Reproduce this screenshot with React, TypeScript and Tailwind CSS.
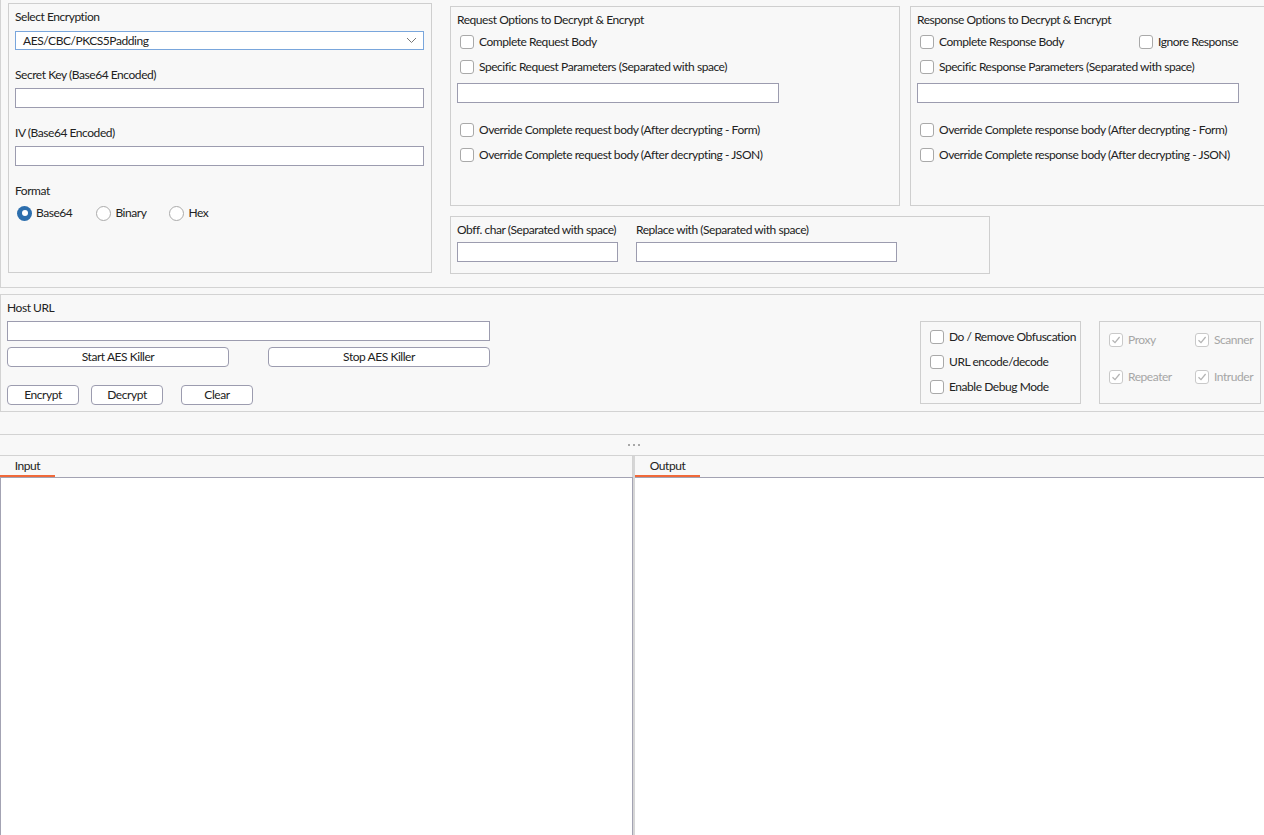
import React from "react";

const FONT = { fontFamily: "Lato, 'Noto Sans', sans-serif", letterSpacing: "-0.45px" };

function Checkbox({ label, disabled = false, checked = false }: { label: string; disabled?: boolean; checked?: boolean }) {
  return (
    <div className="flex items-center h-[25px]">
      <span
        className={`w-[14px] h-[14px] rounded-[3px] border bg-white flex items-center justify-center shrink-0 ${
          disabled ? "border-[#c9c9c9]" : "border-[#a9a9a9]"
        }`}
      >
        {checked && (
          <svg width="10" height="10" viewBox="0 0 10 10">
            <path d="M1.5 5.2 L4 7.6 L8.6 2" fill="none" stroke={disabled ? "#b4b4b4" : "#444"} strokeWidth="1.3" />
          </svg>
        )}
      </span>
      <span className={`ml-[5px] whitespace-nowrap ${disabled ? "text-[#a6a6a6]" : "text-[#222]"}`}>{label}</span>
    </div>
  );
}

function Radio({ label, selected = false }: { label: string; selected?: boolean }) {
  return (
    <div className="flex items-center h-[14px]">
      {selected ? (
        <span className="w-[15px] h-[15px] rounded-full bg-[#2c6ead] flex items-center justify-center shrink-0">
          <span className="w-[6px] h-[6px] rounded-full bg-white" />
        </span>
      ) : (
        <span className="w-[15px] h-[15px] rounded-full border border-[#ababab] bg-white shrink-0" />
      )}
      <span className="ml-[4px] text-[#222]">{label}</span>
    </div>
  );
}

function Input({ className = "" }: { className?: string }) {
  return <div className={`h-[20px] shrink-0 bg-white border border-[#9c9caf] ${className}`} />;
}

function Button({ label, className = "" }: { label: string; className?: string }) {
  return (
    <div
      className={`h-[20px] shrink-0 bg-white border border-[#9c9caf] rounded-[4px] flex items-center justify-center text-[#222] ${className}`}
    >
      {label}
    </div>
  );
}

function Label({ children, className = "" }: { children: React.ReactNode; className?: string }) {
  return <div className={`h-[14px] leading-[14px] text-[#222] whitespace-nowrap ${className}`}>{children}</div>;
}

export default function App() {
  return (
    <div className="w-[1264px] h-[835px] overflow-hidden bg-[#f8f8f8] flex flex-col text-[12px]" style={FONT}>
      {/* Top section */}
      <div className="h-[288px] shrink-0 border-b border-l border-[#d3d3d3] flex">
        {/* Left box */}
        <div className="shrink-0 ml-[7px] mt-[3px] w-[424px] h-[270px] border border-[#cfcfcf] pt-[6px] pl-[6px] pr-[7px] flex flex-col">
          <Label>Select Encryption</Label>
          <div className="mt-[7px] h-[19px] bg-white border border-[#79a6dc] flex items-center justify-between pl-[7px] pr-[6px] text-[#222]">
            <span>AES/CBC/PKCS5Padding</span>
            <svg width="11" height="7" viewBox="0 0 11 7">
              <path d="M1 1 L5.5 5.5 L10 1" fill="none" stroke="#777" strokeWidth="1" />
            </svg>
          </div>
          <Label className="mt-[18px]">Secret Key (Base64 Encoded)</Label>
          <Input className="mt-[6px]" />
          <Label className="mt-[18px]">IV (Base64 Encoded)</Label>
          <Input className="mt-[6px]" />
          <Label className="mt-[18px]">Format</Label>
          <div className="mt-[8px] flex items-center pl-[2px]">
            <Radio label="Base64" selected />
            <div className="ml-[24px]">
              <Radio label="Binary" />
            </div>
            <div className="ml-[23px]">
              <Radio label="Hex" />
            </div>
          </div>
        </div>

        {/* Right area */}
        <div className="shrink-0 ml-[18px] mt-[6px] flex flex-col">
          <div className="flex">
            {/* Request options */}
            <div className="shrink-0 w-[450px] h-[200px] border border-[#cfcfcf] pt-[6px] pl-[6px] flex flex-col">
              <Label>Request Options to Decrypt &amp; Encrypt</Label>
              <div className="mt-[2px] pl-[3px]">
                <Checkbox label="Complete Request Body" />
                <Checkbox label="Specific Request Parameters (Separated with space)" />
              </div>
              <Input className="mt-[4px] w-[322px]" />
              <div className="mt-[14px] pl-[3px]">
                <Checkbox label="Override Complete request body (After decrypting - Form)" />
                <Checkbox label="Override Complete request body (After decrypting - JSON)" />
              </div>
            </div>
            {/* Response options */}
            <div className="shrink-0 ml-[10px] w-[370px] h-[200px] border border-[#cfcfcf] pt-[6px] pl-[6px] flex flex-col">
              <Label>Response Options to Decrypt &amp; Encrypt</Label>
              <div className="mt-[2px] pl-[3px]">
                <div className="flex">
                  <div className="w-[219px] shrink-0">
                    <Checkbox label="Complete Response Body" />
                  </div>
                  <Checkbox label="Ignore Response" />
                </div>
                <Checkbox label="Specific Response Parameters (Separated with space)" />
              </div>
              <Input className="mt-[4px] w-[322px]" />
              <div className="mt-[14px] pl-[3px]">
                <Checkbox label="Override Complete response body (After decrypting - Form)" />
                <Checkbox label="Override Complete response body (After decrypting - JSON)" />
              </div>
            </div>
          </div>
          {/* Obff box */}
          <div className="shrink-0 mt-[10px] w-[540px] h-[58px] border border-[#cfcfcf] pt-[6px] pl-[6px] flex">
            <div className="flex flex-col">
              <Label>Obff. char (Separated with space)</Label>
              <Input className="mt-[5px] w-[161px]" />
            </div>
            <div className="ml-[18px] flex flex-col">
              <Label>Replace with (Separated with space)</Label>
              <Input className="mt-[5px] w-[261px]" />
            </div>
          </div>
        </div>
      </div>

      {/* Host section */}
      <div className="mt-[6px] h-[118px] shrink-0 border-t border-b border-l border-[#d3d3d3] flex">
        <div className="shrink-0 pt-[6px] pl-[6px] flex flex-col w-[490px]">
          <Label>Host URL</Label>
          <Input className="mt-[6px] w-[483px]" />
          <div className="mt-[6px] flex">
            <Button label="Start AES Killer" className="w-[222px]" />
            <Button label="Stop AES Killer" className="ml-[39px] w-[222px]" />
          </div>
          <div className="mt-[18px] flex">
            <Button label="Encrypt" className="w-[72px]" />
            <Button label="Decrypt" className="ml-[12px] w-[72px]" />
            <Button label="Clear" className="ml-[18px] w-[72px]" />
          </div>
        </div>
        <div className="shrink-0 ml-[429px] mt-[26px] flex">
          <div className="shrink-0 w-[161px] h-[83px] border border-[#cfcfcf] pt-[2px] pl-[9px]">
            <Checkbox label="Do / Remove Obfuscation" />
            <Checkbox label="URL encode/decode" />
            <Checkbox label="Enable Debug Mode" />
          </div>
          <div className="shrink-0 ml-[18px] w-[162px] h-[83px] border border-[#cfcfcf] pt-[5px] pl-[9px] grid grid-cols-[86px_1fr] gap-y-[12px] content-start">
            <Checkbox label="Proxy" disabled checked />
            <Checkbox label="Scanner" disabled checked />
            <Checkbox label="Repeater" disabled checked />
            <Checkbox label="Intruder" disabled checked />
          </div>
        </div>
      </div>

      {/* spacer + divider */}
      <div className="h-[23px] shrink-0 border-b border-[#d3d3d3]" />
      <div className="h-[20px] shrink-0 flex items-center justify-center">
        <div className="flex gap-[3px] ml-[4px]">
          <span className="w-[2px] h-[2px] bg-[#a8a8a8]" />
          <span className="w-[2px] h-[2px] bg-[#a8a8a8]" />
          <span className="w-[2px] h-[2px] bg-[#a8a8a8]" />
        </div>
      </div>

      {/* Editors */}
      <div className="flex-1 flex border-t border-[#d3d3d3] min-h-0">
        <div className="w-[633px] shrink-0 flex flex-col">
          <div className="h-[21px] flex border-r border-[#d3d3d3]">
            <div className="w-[55px] flex flex-col">
              <div className="flex-1 flex items-center justify-center text-[#222]">Input</div>
              <div className="h-[2px] bg-[#f0693a]" />
            </div>
          </div>
          <div className="flex-1 bg-white border-t border-l border-r border-[#a3a3b3]" />
        </div>
        <div className="w-[2px] shrink-0 bg-[#d6d6d6]" />
        <div className="flex-1 flex flex-col">
          <div className="h-[21px] flex">
            <div className="w-[65px] flex flex-col">
              <div className="flex-1 flex items-center justify-center text-[#222]">Output</div>
              <div className="h-[2px] bg-[#f0693a]" />
            </div>
          </div>
          <div className="flex-1 bg-white border-t border-[#a3a3b3]" />
        </div>
      </div>
    </div>
  );
}
